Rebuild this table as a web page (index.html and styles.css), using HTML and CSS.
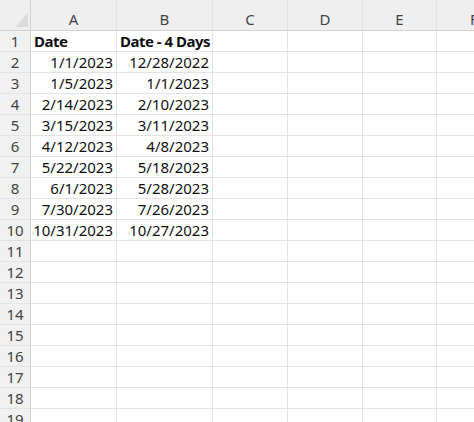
FILE: index.html
```html
<!DOCTYPE html>
<html>
<head>
<meta charset="utf-8">
<link rel="stylesheet" href="styles.css">
</head>
<body>
<div class="viewport">
<div class="sheet">
  <div class="corner"><svg width="13" height="14" viewBox="0 0 13 14"><polygon points="0,14 13,14 13,0" fill="#dcdcdc"/></svg></div>
  <div class="colhead">A</div>
  <div class="colhead">B</div>
  <div class="colhead">C</div>
  <div class="colhead">D</div>
  <div class="colhead">E</div>
  <div class="colhead">F</div>

  <div class="rowhead">1</div><div class="cell bold">Date</div><div class="cell bold">Date - 4 Days</div><div class="cell"></div><div class="cell"></div><div class="cell"></div><div class="cell"></div>
  <div class="rowhead">2</div><div class="cell num">1/1/2023</div><div class="cell num">12/28/2022</div><div class="cell"></div><div class="cell"></div><div class="cell"></div><div class="cell"></div>
  <div class="rowhead">3</div><div class="cell num">1/5/2023</div><div class="cell num">1/1/2023</div><div class="cell"></div><div class="cell"></div><div class="cell"></div><div class="cell"></div>
  <div class="rowhead">4</div><div class="cell num">2/14/2023</div><div class="cell num">2/10/2023</div><div class="cell"></div><div class="cell"></div><div class="cell"></div><div class="cell"></div>
  <div class="rowhead">5</div><div class="cell num">3/15/2023</div><div class="cell num">3/11/2023</div><div class="cell"></div><div class="cell"></div><div class="cell"></div><div class="cell"></div>
  <div class="rowhead">6</div><div class="cell num">4/12/2023</div><div class="cell num">4/8/2023</div><div class="cell"></div><div class="cell"></div><div class="cell"></div><div class="cell"></div>
  <div class="rowhead">7</div><div class="cell num">5/22/2023</div><div class="cell num">5/18/2023</div><div class="cell"></div><div class="cell"></div><div class="cell"></div><div class="cell"></div>
  <div class="rowhead">8</div><div class="cell num">6/1/2023</div><div class="cell num">5/28/2023</div><div class="cell"></div><div class="cell"></div><div class="cell"></div><div class="cell"></div>
  <div class="rowhead">9</div><div class="cell num">7/30/2023</div><div class="cell num">7/26/2023</div><div class="cell"></div><div class="cell"></div><div class="cell"></div><div class="cell"></div>
  <div class="rowhead">10</div><div class="cell num">10/31/2023</div><div class="cell num">10/27/2023</div><div class="cell"></div><div class="cell"></div><div class="cell"></div><div class="cell"></div>
  <div class="rowhead">11</div><div class="cell"></div><div class="cell"></div><div class="cell"></div><div class="cell"></div><div class="cell"></div><div class="cell"></div>
  <div class="rowhead">12</div><div class="cell"></div><div class="cell"></div><div class="cell"></div><div class="cell"></div><div class="cell"></div><div class="cell"></div>
  <div class="rowhead">13</div><div class="cell"></div><div class="cell"></div><div class="cell"></div><div class="cell"></div><div class="cell"></div><div class="cell"></div>
  <div class="rowhead">14</div><div class="cell"></div><div class="cell"></div><div class="cell"></div><div class="cell"></div><div class="cell"></div><div class="cell"></div>
  <div class="rowhead">15</div><div class="cell"></div><div class="cell"></div><div class="cell"></div><div class="cell"></div><div class="cell"></div><div class="cell"></div>
  <div class="rowhead">16</div><div class="cell"></div><div class="cell"></div><div class="cell"></div><div class="cell"></div><div class="cell"></div><div class="cell"></div>
  <div class="rowhead">17</div><div class="cell"></div><div class="cell"></div><div class="cell"></div><div class="cell"></div><div class="cell"></div><div class="cell"></div>
  <div class="rowhead">18</div><div class="cell"></div><div class="cell"></div><div class="cell"></div><div class="cell"></div><div class="cell"></div><div class="cell"></div>
  <div class="rowhead">19</div><div class="cell"></div><div class="cell"></div><div class="cell"></div><div class="cell"></div><div class="cell"></div><div class="cell"></div>
</div>
</div>
</body>
</html>
```

FILE: styles.css
```css
html, body {
  margin: 0;
  padding: 0;
  background: #ffffff;
  overflow: hidden;
}

.viewport {
  width: 474px;
  height: 422px;
  overflow: hidden;
}

.sheet {
  display: grid;
  grid-template-columns: 31px 86px 96px 75px 75px 74px 75px;
  grid-template-rows: 31px;
  grid-auto-rows: 21px;
  width: 512px;
  font-family: "Noto Sans", "Open Sans", sans-serif;
  font-size: 15px;
  color: #111;
}

.sheet > div {
  box-sizing: border-box;
}

.corner {
  background: #efefef;
  border-right: 1px solid #d2d2d2;
  border-bottom: 1px solid #d2d2d2;
  display: flex;
  align-items: flex-end;
  justify-content: flex-end;
  padding: 0 2px 3px 0;
}

.colhead {
  background: #efefef;
  border-right: 1px solid #e2e2e2;
  border-bottom: 1px solid #d2d2d2;
  display: flex;
  align-items: center;
  justify-content: center;
  padding-top: 7px;
  color: #444;
  font-size: 15px;
}

.rowhead {
  background: #f1f1f1;
  border-right: 1px solid #d2d2d2;
  border-bottom: 1px solid #e4e4e4;
  display: flex;
  align-items: center;
  justify-content: center;
  color: #444;
  font-size: 15px;
  line-height: 1;
}

.cell {
  border-right: 1px solid #e3e3e3;
  border-bottom: 1px solid #e3e3e3;
  display: flex;
  align-items: center;
  padding: 0 3px;
  line-height: 1;
  white-space: pre;
  overflow: visible;
}

.cell.num {
  justify-content: flex-end;
}

.cell.bold {
  font-weight: 700;
  justify-content: flex-start;
  padding-left: 3px;
  letter-spacing: -0.5px;
}
```
